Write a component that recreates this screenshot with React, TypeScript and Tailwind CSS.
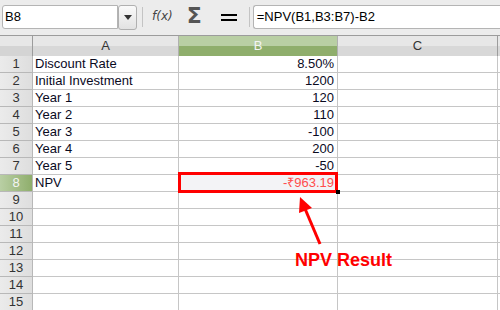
import React from "react";

const rows: [string, string][] = [
  ["Discount Rate", "8.50%"],
  ["Initial Investment", "1200"],
  ["Year 1", "120"],
  ["Year 2", "110"],
  ["Year 3", "-100"],
  ["Year 4", "200"],
  ["Year 5", "-50"],
  ["NPV", ""],
  ["", ""],
  ["", ""],
  ["", ""],
  ["", ""],
  ["", ""],
  ["", ""],
  ["", ""],
];

const headBg = "bg-[linear-gradient(#e7e7e7_50%,#d8d8d8_50%)]";
const headSel = "bg-[linear-gradient(#b9cfa4_50%,#8fae6c_50%)]";

function Toolbar() {
  return (
    <div className="flex h-[36px] items-start border-b border-[#9c9c9c] bg-[#ececec] pt-[5px]">
      <div className="ml-[2px] flex h-[24px] w-[116px] items-center rounded-l-[3px] border border-[#b4b4b4] bg-white pl-[2px] text-[13px] text-black">
        B8
      </div>
      <div className="flex h-[25px] w-[19px] items-center justify-center rounded-[3px] border border-[#b0b0b0] bg-[linear-gradient(#fafafa,#e2e2e2)]">
        <svg width="8" height="5" viewBox="0 0 8 5">
          <path d="M0 0h8L4 5z" fill="#333" />
        </svg>
      </div>
      <div className="ml-[5px] mt-[2px] h-[20px] w-px bg-[#c4c4c4]" />
      <div className="ml-[9px] mt-[3px] font-['DejaVu_Sans',sans-serif] text-[12px] italic leading-[16px] text-[#444]">
        f(x)
      </div>
      <div className="ml-[14px] mt-[-1px] font-['DejaVu_Sans',sans-serif] text-[22px] font-bold leading-[24px] text-[#555]">
        Σ
      </div>
      <div className="ml-[19px] mt-[9px] flex w-[16px] flex-col gap-[3px]">
        <div className="h-[2px] bg-black" />
        <div className="h-[2px] bg-black" />
      </div>
      <div className="ml-[12px] mt-[2px] h-[20px] w-px bg-[#c4c4c4]" />
      <div className="ml-[3px] flex h-[24px] flex-1 items-center rounded-l-[3px] border border-r-0 border-[#b4b4b4] bg-white pl-[3px] text-[13px] text-black">
        =NPV(B1,B3:B7)-B2
      </div>
    </div>
  );
}

function HeaderRow() {
  return (
    <div className="grid h-[20px] grid-cols-[33px_146px_159px_160px_1fr] border-b border-[#9c9c9c] text-[13px]">
      <div className="border-r border-[#9c9c9c] bg-[linear-gradient(#e7e7e7_50%,#d4d4d4_50%)]" />
      <div className={`flex items-center justify-center border-r border-[#b0b0b0] text-[#333] ${headBg}`}>A</div>
      <div className={`flex items-center justify-center border-r border-[#b0b0b0] text-[#f4f4f4] ${headSel}`}>B</div>
      <div className={`flex items-center justify-center border-r border-[#9c9c9c] text-[#333] ${headBg}`}>C</div>
      <div className={headBg} />
    </div>
  );
}

export default function App() {
  return (
    <div className="relative h-[310px] w-[500px] overflow-hidden bg-white font-['Liberation_Sans',Arial,sans-serif]">
      <Toolbar />
      <HeaderRow />
      {rows.map(([a, b], i) => {
        const n = i + 1;
        const sel = n === 8;
        return (
          <div
            key={n}
            className="grid h-[17px] grid-cols-[33px_146px_159px_160px_1fr] text-[13px] leading-[16px]"
          >
            <div
              className={`flex items-center justify-center border-r border-b border-[#b8b8b8] ${
                sel
                  ? "bg-[linear-gradient(to_right,#b9cfa4,#8fae6c)] text-[#f4f4f4]"
                  : "bg-[linear-gradient(to_right,#ebebeb,#dedede)] text-[#333]"
              }`}
            >
              {n}
            </div>
            <div className="truncate border-r border-b border-[#c6c6c6] pl-[2px] text-[#0a0a1e]">{a}</div>
            <div className="relative border-r border-b border-[#c6c6c6] pr-[3px] text-right text-[#0a0a1e]">
              {sel ? (
                <>
                  <div className="absolute left-[-1px] top-[-3px] z-10 flex h-[21px] w-[160px] items-center justify-end border-[3px] border-[#ff0000] bg-[#f3f3f6] pr-[1px] text-[#ff4d4d]">
                    -₹963.19
                  </div>
                  <div className="absolute bottom-[-3px] right-[-3px] z-20 h-[4px] w-[4px] bg-black" />
                </>
              ) : (
                b
              )}
            </div>
            <div className="border-r border-b border-[#c6c6c6]" />
            <div className="border-b border-[#c6c6c6]" />
          </div>
        );
      })}

      <svg className="absolute left-0 top-0" width="500" height="310">
        <line x1="320" y1="244" x2="303" y2="204" stroke="#ff0000" strokeWidth="3" />
        <path d="M300 197 L299 213 L312 208 Z" fill="#ff0000" />
      </svg>
      <div className="absolute left-[295px] top-[250px] text-[18px] font-bold leading-[20px] text-[#ff0000]">
        NPV Result
      </div>
    </div>
  );
}
